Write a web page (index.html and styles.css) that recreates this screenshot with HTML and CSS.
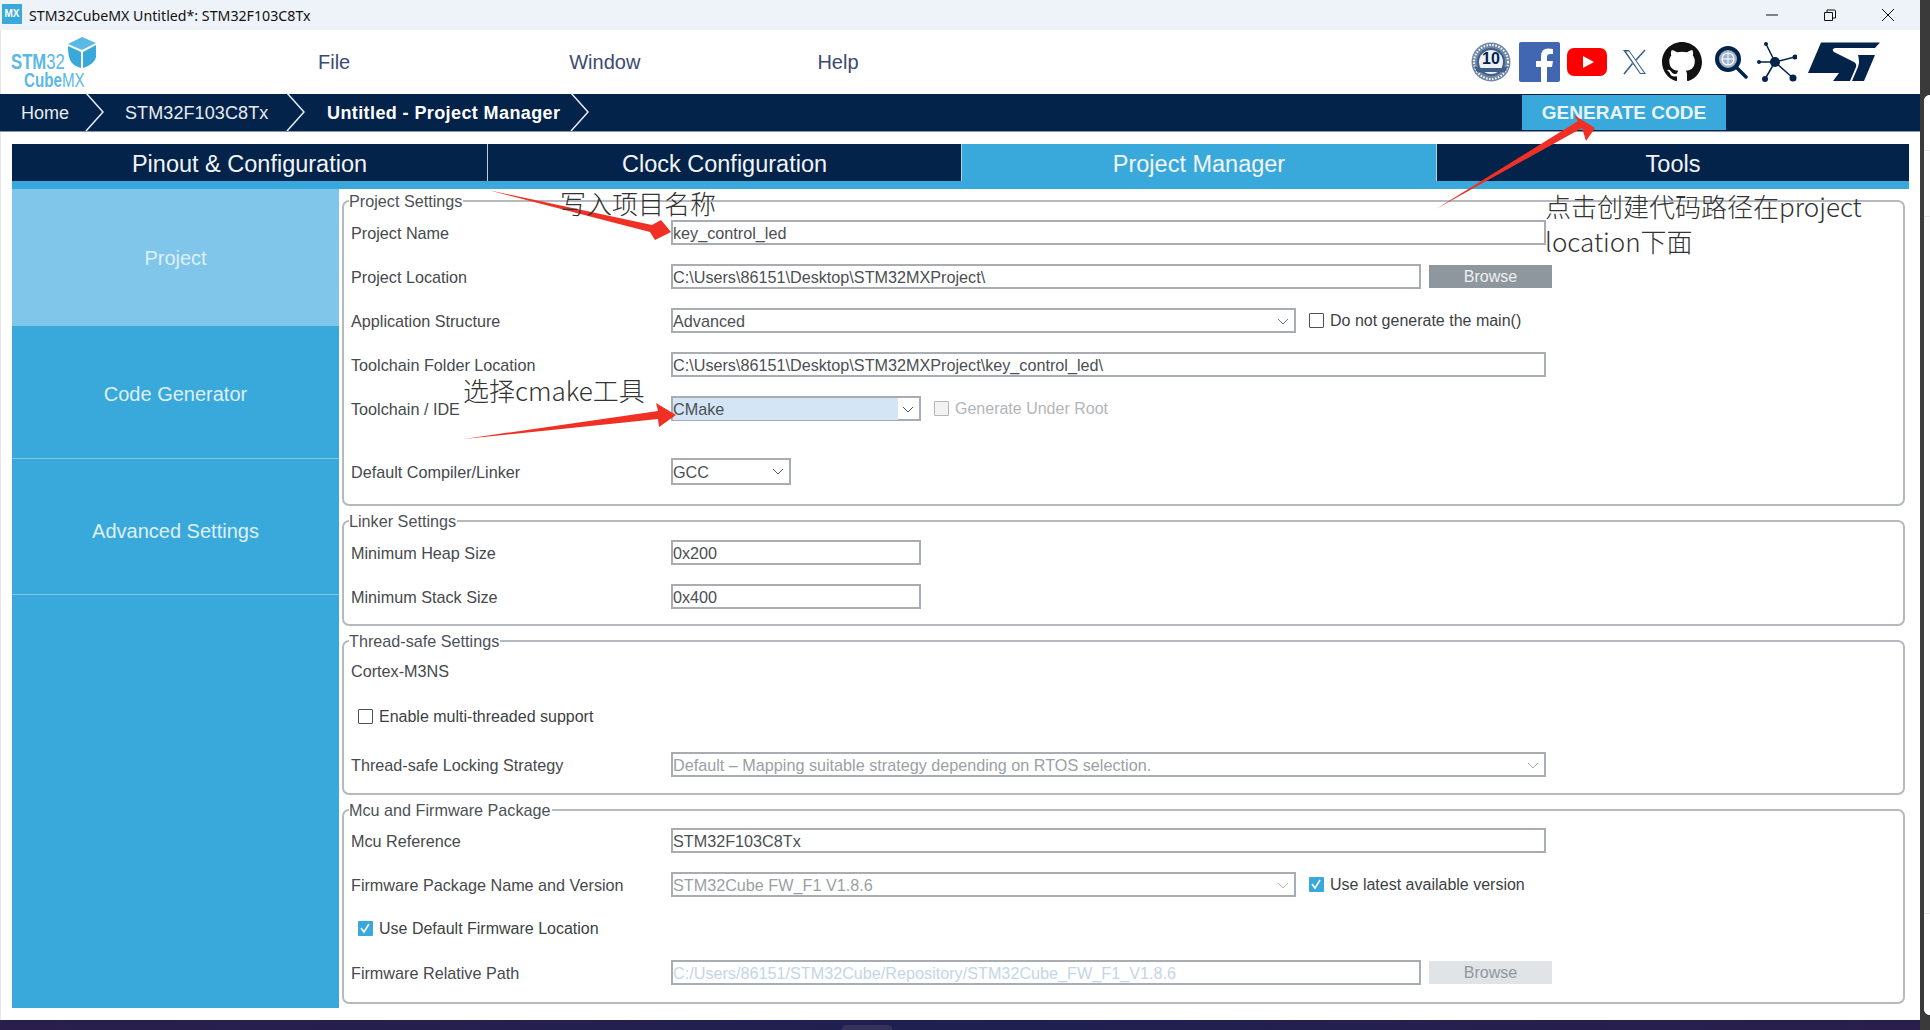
FILE: index.html
```html
<!DOCTYPE html>
<html>
<head>
    <meta charset="utf-8">
    <title>STM32CubeMX Untitled*: STM32F103C8Tx</title>
    <link rel="stylesheet" href="styles.css">
</head>
<body>
    <div class="window">
        <div class="title-bar">
            <div class="app-icon">MX</div>
            <div class="title-text">STM32CubeMX Untitled*: STM32F103C8Tx</div>
            <div class="win-buttons">
                <svg width="14" height="14" viewBox="0 0 14 14"><path d="M1 7h12" stroke="#111" fill="none"/></svg>
                <svg width="14" height="14" viewBox="0 0 14 14"><path d="M1.5 4.5h8v8h-8zM4 4.5v-2.5h7.5a1 1 0 0 1 1 1v7h-3" stroke="#111" fill="none"/></svg>
                <svg width="14" height="14" viewBox="0 0 14 14"><path d="M1 1l12 12M13 1L1 13" stroke="#111" fill="none"/></svg>
            </div>
        </div>

        <div class="top-bar">
            <svg class="logo" width="90" height="58" viewBox="0 0 90 58">
                <path d="M57 8l14-7 14 6-14 7z" fill="#5cb8e4"/>
                <path d="M57 10l13 6v16q-8-2-11-8q-2-5-2-14z" fill="#39a9dc"/>
                <path d="M72 16l13-7v12q-1 7-13 11z" fill="#39a9dc"/>
                <text class="logo-text" transform="scale(.76 1)"><tspan x="0" y="33" class="logo-top logo-bold">STM</tspan><tspan class="logo-top">32</tspan><tspan x="17" y="51" class="logo-bold">Cube</tspan><tspan>MX</tspan></text>
            </svg>
            <nav class="menu">
                <span class="menu-file">File</span>
                <span class="menu-window">Window</span>
                <span class="menu-help">Help</span>
            </nav>
            <div class="social">
                <svg class="ic-medal" width="40" height="40" viewBox="0 0 40 40">
                    <circle cx="20" cy="20" r="19.5" fill="#6f88a6"/>
                    <circle cx="20" cy="20" r="17" fill="none" stroke="#fff" stroke-width="2" stroke-dasharray="1.5 1.5"/>
                    <circle cx="20" cy="20" r="14" fill="#3f5f88"/>
                    <circle cx="20" cy="20" r="12" fill="#eef1f5"/>
                    <path d="M3 24l5 2h24l5-2-3 6H6z" fill="#3f5f88"/>
                    <text x="20" y="22" class="medal-text">10</text>
                </svg>
                <svg class="ic-fb" width="41" height="40" viewBox="0 0 41 40">
                    <rect width="41" height="40" rx="2" fill="#4267b2"/>
                    <path d="M28 40V25h5l1-6h-6v-4q0-3 3-3h3V7q-2-.5-5-.5q-7 0-7 8V19h-5v6h5v15z" fill="#fff"/>
                </svg>
                <svg class="ic-yt" width="40" height="28" viewBox="0 0 40 28">
                    <rect width="40" height="28" rx="7" fill="#f00"/>
                    <path d="M16 8l11 6-11 6z" fill="#fff"/>
                </svg>
                <svg class="ic-x" width="25" height="26" viewBox="0 0 25 26">
                    <path d="M1 1h6l17 24h-6zM4 2.5l14.500 21.500h3.500L7 2.500z" fill="#3d5f8c" fill-rule="evenodd"/>
                    <path d="M23 1L14 11M10.5 14.5L2 25" stroke="#3d5f8c" stroke-width="1.6" fill="none"/>
                </svg>
                <svg class="ic-gh" width="40" height="40" viewBox="0 0 16 16">
                    <path d="M8 0C3.58 0 0 3.58 0 8c0 3.54 2.29 6.53 5.47 7.59.4.07.55-.17.55-.38 0-.19-.01-.82-.01-1.49-2.01.37-2.53-.49-2.69-.94-.09-.23-.48-.94-.82-1.13-.28-.15-.68-.52-.01-.53.63-.01 1.08.58 1.23.82.72 1.21 1.87.87 2.33.66.07-.52.28-.87.51-1.07-1.78-.2-3.64-.89-3.64-3.95 0-.87.31-1.59.82-2.15-.08-.2-.36-1.02.08-2.12 0 0 .67-.21 2.2.82.64-.18 1.32-.27 2-.27s1.36.09 2 .27c1.53-1.04 2.2-.82 2.2-.82.44 1.1.16 1.92.08 2.12.51.56.82 1.27.82 2.15 0 3.07-1.87 3.75-3.65 3.95.29.25.54.73.54 1.48 0 1.07-.01 1.93-.01 2.2 0 .21.15.46.55.38A8.01 8.01 0 0 0 16 8c0-4.42-3.58-8-8-8z" fill="#111"/>
                </svg>
                <svg class="ic-search" width="33" height="33" viewBox="0 0 33 33">
                    <circle cx="13" cy="13" r="11" fill="#9fb3c9" stroke="#03234b" stroke-width="4"/>
                    <circle cx="13" cy="13" r="6" fill="none" stroke="#fff" stroke-width="1.2"/>
                    <path d="M7 13h12M13 7v12" stroke="#fff"/>
                    <path d="M22 22l9 9" stroke="#03234b" stroke-width="3.5" stroke-linecap="round"/>
                </svg>
                <svg class="ic-net" width="40" height="40" viewBox="0 0 40 40">
                    <path d="M18 20L9 2M18 20L38 15M18 20L2 20M18 20L8 37M18 20L36 36" stroke="#03234b" stroke-width="1.5" fill="none"/>
                    <circle cx="18" cy="20" r="5" fill="#03234b"/>
                    <circle cx="9" cy="2" r="2" fill="#03234b"/>
                    <circle cx="38" cy="15" r="2.5" fill="#03234b"/>
                    <circle cx="2" cy="20" r="2" fill="#03234b"/>
                    <circle cx="8" cy="37" r="3" fill="#03234b"/>
                    <circle cx="36" cy="36" r="3.5" fill="#03234b"/>
                </svg>
                <svg class="ic-st" width="72" height="40" viewBox="0 0 72 40">
                    <path d="M13 .5H72L67 6H27Q23 7 26 10L46 20Q49 22 48 25L42 39H25L31 31H0z" fill="#03234b"/>
                    <path d="M50 13H67L56 39H44L50 25Q52 20 50 13z" fill="#03234b"/>
                </svg>
            </div>
        </div>

        <div class="crumb-bar">
            <div class="crumb crumb-home">Home</div>
            <svg class="chev" width="20" height="38" viewBox="0 0 20 38"><path d="M1 0l17 19L1 38" stroke="#e8edf3" stroke-width="1.5" fill="none"/></svg>
            <div class="crumb crumb-mcu">STM32F103C8Tx</div>
            <svg class="chev" width="20" height="38" viewBox="0 0 20 38"><path d="M1 0l17 19L1 38" stroke="#e8edf3" stroke-width="1.5" fill="none"/></svg>
            <div class="crumb crumb-active">Untitled - Project Manager</div>
            <svg class="chev" width="20" height="38" viewBox="0 0 20 38"><path d="M1 0l17 19L1 38" stroke="#e8edf3" stroke-width="1.5" fill="none"/></svg>
            <button class="generate-btn">GENERATE CODE</button>
        </div>

        <div class="tabs">
            <div class="tab tab-pinout">Pinout &amp; Configuration</div>
            <div class="tab tab-clock">Clock Configuration</div>
            <div class="tab tab-project active">Project Manager</div>
            <div class="tab tab-tools">Tools</div>
        </div>

        <div class="content">
            <aside class="side-nav">
                <div class="side-item active">Project</div>
                <div class="side-item item-code">Code Generator</div>
                <div class="side-item item-adv">Advanced Settings</div>
            </aside>

            <div class="panels">
                <fieldset class="group group-project">
                    <legend>Project Settings</legend>
                    <div class="row"><label>Project Name</label><div class="field w-long">key_control_led</div></div>
                    <div class="row">
                        <label>Project Location</label>
                        <div class="field w-browse">C:\Users\86151\Desktop\STM32MXProject\</div>
                        <button class="browse">Browse</button>
                    </div>
                    <div class="row">
                        <label>Application Structure</label>
                        <div class="field select w-select">Advanced<svg class="caret" width="12" height="7" viewBox="0 0 12 7"><path d="M1 1l5 5 5-5" stroke="#777" fill="none"/></svg></div>
                        <div class="check-wrap"><span class="check"></span>Do not generate the main()</div>
                    </div>
                    <div class="row"><label>Toolchain Folder Location</label><div class="field w-long">C:\Users\86151\Desktop\STM32MXProject\key_control_led\</div></div>
                    <div class="row">
                        <label>Toolchain / IDE</label>
                        <div class="field select w-mid picked"><span class="picked-fill">CMake</span><svg class="caret" width="12" height="7" viewBox="0 0 12 7"><path d="M1 1l5 5 5-5" stroke="#555" fill="none"/></svg></div>
                        <div class="check-wrap off"><span class="check"></span>Generate Under Root</div>
                    </div>
                    <div class="row row-compiler">
                        <label>Default Compiler/Linker</label>
                        <div class="field select w-gcc">GCC<svg class="caret" width="12" height="7" viewBox="0 0 12 7"><path d="M1 1l5 5 5-5" stroke="#555" fill="none"/></svg></div>
                    </div>
                </fieldset>

                <fieldset class="group group-linker">
                    <legend>Linker Settings</legend>
                    <div class="row"><label>Minimum Heap Size</label><div class="field w-mid">0x200</div></div>
                    <div class="row"><label>Minimum Stack Size</label><div class="field w-mid">0x400</div></div>
                </fieldset>

                <fieldset class="group group-thread">
                    <legend>Thread-safe Settings</legend>
                    <div class="row"><label>Cortex-M3NS</label></div>
                    <div class="row row-check"><div class="check-wrap"><span class="check"></span>Enable multi-threaded support</div></div>
                    <div class="row row-lock">
                        <label>Thread-safe Locking Strategy</label>
                        <div class="field select w-long off">Default – Mapping suitable strategy depending on RTOS selection.<svg class="caret" width="12" height="7" viewBox="0 0 12 7"><path d="M1 1l5 5 5-5" stroke="#aaa" fill="none"/></svg></div>
                    </div>
                </fieldset>

                <fieldset class="group group-mcu">
                    <legend>Mcu and Firmware Package</legend>
                    <div class="row"><label>Mcu Reference</label><div class="field w-long">STM32F103C8Tx</div></div>
                    <div class="row">
                        <label>Firmware Package Name and Version</label>
                        <div class="field select w-select off">STM32Cube FW_F1 V1.8.6<svg class="caret" width="12" height="7" viewBox="0 0 12 7"><path d="M1 1l5 5 5-5" stroke="#bbb" fill="none"/></svg></div>
                        <div class="check-wrap"><span class="check on"><svg width="14" height="14" viewBox="0 0 14 14"><path d="M3 7l3 4 5-8" stroke="#fff" stroke-width="1.6" fill="none"/></svg></span>Use latest available version</div>
                    </div>
                    <div class="row row-check"><div class="check-wrap"><span class="check on"><svg width="14" height="14" viewBox="0 0 14 14"><path d="M3 7l3 4 5-8" stroke="#fff" stroke-width="1.6" fill="none"/></svg></span>Use Default Firmware Location</div></div>
                    <div class="row">
                        <label>Firmware Relative Path</label>
                        <div class="field w-browse faint">C:/Users/86151/STM32Cube/Repository/STM32Cube_FW_F1_V1.8.6</div>
                        <button class="browse off">Browse</button>
                    </div>
                </fieldset>
            </div>
        </div>
    </div>

    <div class="right-strip">
        <div class="side-panel">
            <div class="side-panel-head"></div>
            <div class="side-panel-sub"></div>
            <div class="side-panel-foot"></div>
        </div>
    </div>
    <div class="taskbar"><div class="task-item"></div></div>

    <!-- hand drawn notes on top of the screenshot -->
    <svg class="arrows" width="1930" height="1030" viewBox="0 0 1930 1030">
        <path d="M488 190L652 225L661 220L671 232L655 240L650 232z" fill="#f03024"/>
        <path d="M464 439L658 411L656 403L676 415L659 427L658 419z" fill="#f03024"/>
        <path d="M1436 209L1578 121L1574 115L1595 128L1586 141L1582 128z" fill="#f03024"/>
    </svg>
    <div class="note note-name">写入项目名称</div>
    <div class="note note-cmake">选择cmake工具</div>
    <div class="note note-code">点击创建代码路径在project<br>location下面</div>
</body>
</html>
```

FILE: styles.css
```css
* {
    box-sizing: border-box;
    margin: 0;
    padding: 0;
}

body {
    width: 1930px;
    height: 1030px;
    overflow: hidden;
    position: relative;
    background: #1f1f4c;
    font-family: "Liberation Sans", Arial, sans-serif;
    color: #333;
}

.window {
    width: 1920px;
    height: 1020px;
    background: white;
    box-shadow: inset 1px 0 #e4e6ea;
    display: flex;
    flex-direction: column;
}

.title-bar {
    height: 30px;
    flex: none;
    display: flex;
    align-items: center;
    background: #eef2f9;
    padding-left: 2px;
}

.app-icon {
    width: 20px;
    height: 20px;
    background: #39a9dc;
    color: white;
    font-size: 10px;
    font-weight: bold;
    line-height: 20px;
    text-align: center;
    margin-top: -2px;
}

.title-text {
    margin-left: 7px;
    font-family: "Noto Sans", sans-serif;
    font-size: 14.2px;
    color: #111;
}

.win-buttons {
    margin-left: auto;
    display: flex;
    gap: 44px;
    padding-right: 25px;
}

.top-bar {
    height: 64px;
    flex: none;
    display: flex;
    align-items: flex-start;
}

.logo {
    margin: 6px 0 0 11px;
    flex: none;
}

.logo-text {
    font-size: 20px;
    fill: #5cb8e4;
}

.logo-top {
    font-size: 22px;
}

.logo-bold {
    font-weight: bold;
}

.medal-text {
    font-size: 16px;
    font-weight: bold;
    fill: #03234b;
    text-anchor: middle;
}

.menu {
    display: flex;
    font-size: 20px;
    color: #3b4a72;
    height: 64px;
    align-items: center;
}

.menu-file {
    margin-left: 217px;
}

.menu-window {
    margin-left: 219px;
}

.menu-help {
    margin-left: 177px;
}

.social {
    margin-left: auto;
    margin-right: 40px;
    height: 64px;
    display: flex;
    align-items: center;
}

.ic-medal { margin-right: 8px; }
.ic-fb { margin-right: 7px; }
.ic-yt { margin-right: 15px; }
.ic-x { margin-right: 15px; }
.ic-gh { margin-right: 13px; }
.ic-search { margin-right: 9px; }
.ic-net { margin-right: 11px; }

.crumb-bar {
    height: 38px;
    flex: none;
    display: flex;
    align-items: center;
    background: #03234b;
    color: #e8edf3;
    font-size: 18px;
    border-bottom: 1px solid #8796aa;
}

.crumb {
    padding-top: 2px;
}

.crumb-home {
    margin-left: 21px;
    width: 64px;
}

.chev {
    flex: none;
    margin-top: -1px;
}

.crumb-mcu {
    margin-left: 20px;
    width: 161px;
    letter-spacing: 0.1px;
}

.crumb-active {
    margin-left: 21px;
    width: 243px;
    font-weight: bold;
    color: white;
    letter-spacing: 0.4px;
    white-space: nowrap;
}

.generate-btn {
    margin-left: auto;
    margin-right: 194px;
    width: 204px;
    height: 35px;
    border: none;
    background: #39a9dc;
    color: #e9f5fb;
    font-family: inherit;
    font-size: 19px;
    font-weight: bold;
    padding-top: 1px;
}

.tabs {
    flex: none;
    display: flex;
    margin: 12px 11px 0 12px;
    height: 45px;
    border-bottom: 8px solid #39a9dc;
}

.tab {
    background: #03234b;
    color: #f2f5f8;
    font-size: 23.5px;
    text-align: center;
    line-height: 40px;
    border-right: 1px solid #b9cfe0;
}

.tab-pinout { width: 476px; }
.tab-clock { width: 474px; }
.tab-project { width: 474px; }
.tab-tools { width: 473px; border-right: none; border-left: 1px solid #b9cfe0; }

.tab.active {
    background: #39a9dc;
    border-right: none;
}

.content {
    flex: 1;
    display: flex;
    margin-left: 12px;
    margin-right: 15px;
}

.side-nav {
    width: 327px;
    flex: none;
    height: 819px;
    background: #39a9dc;
}

.side-item {
    display: flex;
    align-items: center;
    justify-content: center;
    color: #dff0f9;
    font-size: 20px;
    border-bottom: 1px solid #7fc6e9;
    height: 135px;
}

.side-item.active {
    height: 137px;
    background: #80c6ea;
    border-bottom: none;
    padding-top: 1px;
}

.item-code {
    height: 133px;
    padding-top: 5px;
}

.item-adv {
    height: 136px;
    padding-top: 9px;
}

.panels {
    flex: 1;
    padding: 3px 0 0 3px;
    display: flex;
    flex-direction: column;
}

.group {
    border: 2px solid #b4babf;
    border-radius: 7px;
    padding: 0 0 0 7px;
    flex: none;
}

.group legend {
    margin-left: -2px;
    padding: 0 1px 0 0;
    font-size: 16.2px;
    line-height: 18px;
    color: #4d5156;
}

.group-project { height: 314px; }
.group-linker { height: 114px; margin-top: 6px; }
.group-thread { height: 163px; margin-top: 6px; }
.group-mcu { height: 203px; margin-top: 6px; }

.row {
    display: flex;
    align-items: center;
    height: 25px;
    margin-top: 19px;
    font-size: 16.2px;
}

.group legend + .row {
    margin-top: 10px;
}

.row-compiler {
    margin-top: 37px;
    height: 27px;
}

.group-thread legend + .row {
    margin-top: 8px;
}

.group-thread .row-check {
    margin-top: 21px;
}

.group-thread .row-lock {
    margin-top: 23px;
}

.group-mcu legend + .row {
    margin-top: 9px;
}

.row label {
    width: 320px;
    flex: none;
    color: #46494d;
    white-space: nowrap;
    padding-top: 2px;
}

.field {
    height: 25px;
    border: 2px solid #a7adb2;
    background: white;
    line-height: 22px;
    font-size: 16.2px;
    color: #4c4f53;
    white-space: nowrap;
    position: relative;
    flex: none;
}

.w-long { width: 875px; }
.w-browse { width: 750px; }
.w-select { width: 625px; }
.w-mid { width: 250px; }
.w-gcc { width: 120px; height: 27px; line-height: 24px; }

.select .caret {
    position: absolute;
    right: 5px;
    top: 8px;
}

.picked-fill {
    display: block;
    width: 225px;
    background: #d4e6f5;
}

.field.off {
    color: #9b9fa3;
}

.field.faint {
    color: #c3d6e6;
}

.browse {
    width: 123px;
    height: 23px;
    margin-left: 8px;
    border: none;
    background: #8f979e;
    color: #eef0f2;
    font-family: inherit;
    font-size: 16px;
    flex: none;
}

.browse.off {
    background: #e1e4e7;
    color: #8f979e;
}

.check-wrap {
    display: flex;
    align-items: center;
    margin-left: 13px;
    font-size: 16px;
    color: #3c3f43;
    white-space: nowrap;
}

.check-wrap.off {
    color: #b3b6b9;
}

.check {
    width: 15px;
    height: 15px;
    border: 1px solid #4c5157;
    border-radius: 1px;
    margin-right: 6px;
    flex: none;
    background: white;
}

.check-wrap.off .check {
    border-color: #b3b6b9;
    background: #f2f2f2;
}

.check.on {
    border: none;
    background: #39a9dc;
}

.row-check .check-wrap {
    margin-left: 7px;
}

.right-strip {
    position: absolute;
    top: 0;
    left: 1920px;
    width: 10px;
    height: 1030px;
    background: #3a3a3a;
}

.side-panel {
    position: absolute;
    left: 4px;
    top: 95px;
    width: 6px;
    height: 920px;
    background: #f9f9f9;
    border-radius: 6px 0 0 6px;
}

.side-panel-head {
    height: 56px;
    border-bottom: 1px solid #e8e8e8;
    background: white;
    border-radius: 6px 0 0 0;
}

.side-panel-sub {
    height: 66px;
    border-bottom: 1px solid #e8e8e8;
}

.side-panel-foot {
    position: absolute;
    left: 0;
    right: 0;
    bottom: 0;
    height: 102px;
    border-top: 1px solid #e8e8e8;
    background: white;
    border-radius: 0 0 0 6px;
}

.taskbar {
    position: absolute;
    left: 0;
    top: 1020px;
    width: 1920px;
    height: 10px;
    background: linear-gradient(90deg, #2a1f4c, #1f2050 50%, #2a1f4c);
}

.task-item {
    position: absolute;
    left: 842px;
    top: 5px;
    width: 50px;
    height: 5px;
    background: #35325a;
    border-radius: 4px 4px 0 0;
}

.arrows {
    position: absolute;
    left: 0;
    top: 0;
    pointer-events: none;
}

.note {
    position: absolute;
    font-family: "Noto Sans CJK SC", "Noto Sans", sans-serif;
    font-size: 26px;
    font-weight: 300;
    line-height: 35px;
    color: #333;
    white-space: nowrap;
}

.note-name { left: 560px; top: 185px; }
.note-cmake { left: 463px; top: 372px; }
.note-code { left: 1545px; top: 188px; }
```
